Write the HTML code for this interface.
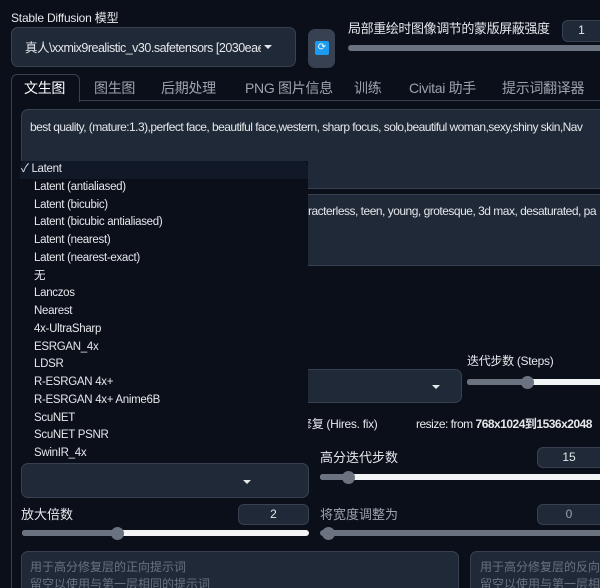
<!DOCTYPE html><html><head><meta charset="utf-8"><style>
*{box-sizing:border-box;margin:0;padding:0}
html,body{width:600px;height:588px;overflow:hidden}
body{background:#0b0f19;font-family:"Liberation Sans","Noto Sans CJK SC",sans-serif;color:#e5e7eb;position:relative;font-size:13px}
.a{position:absolute}
.box{position:absolute;background:#1f2937;border:1px solid #374151;border-radius:7px}
.lbl{position:absolute;font-size:13px;color:#e5e7eb;white-space:nowrap;overflow:hidden}
.trk{position:absolute;height:6px;border-radius:3px;background:#f3f4f6}
.fill{position:absolute;height:6px;border-radius:3px;background:#6b7280}
.th{position:absolute;width:13px;height:13px;border-radius:50%;background:#6b7280}
.caret{position:absolute;width:0;height:0;border-left:4px solid transparent;border-right:4px solid transparent;border-top:4px solid #e5e7eb}
.num{position:absolute;background:#1f2937;border:1px solid #374151;border-radius:6px;font-size:12px;text-align:center;line-height:19px;height:21px}
.tab{position:absolute;top:78px;font-size:14px;color:#9ca3af;letter-spacing:-0.3px}
.dd div{height:17.75px;line-height:17.75px;padding-left:14px;font-size:11.5px;color:#e5e7eb;white-space:nowrap;letter-spacing:-0.3px}
</style></head><body>
<div class="lbl" style="left:11px;top:9px;font-size:12px;letter-spacing:-0.2px">Stable Diffusion 模型</div>
<div class="box" style="left:11px;top:27px;width:285px;height:40px"></div>
<div class="lbl" style="left:25px;top:37px;width:236px;font-size:12.5px;letter-spacing:-0.5px">真人\xxmix9realistic_v30.safetensors [2030eae6</div>
<div class="caret" style="left:264px;top:45px"></div>
<div class="box" style="left:308px;top:29px;width:27px;height:39px;background:#374151;border-color:#374151"></div>
<div class="a" style="left:315px;top:41px;width:14px;height:14px;background:#1d9bf0;border-radius:2px;color:#fff;font-size:10px;line-height:14px;text-align:center">⟳</div>
<div class="lbl" style="left:348px;top:18px;font-size:13px;letter-spacing:-0.4px">局部重绘时图像调节的蒙版屏蔽强度</div>
<div class="num" style="left:562px;top:20px;width:38px;height:22px;border-right:none;border-radius:6px 0 0 6px">1</div>
<div class="fill" style="left:348px;top:45px;width:252px;border-radius:3px 0 0 3px"></div>

<div class="a" style="left:12px;top:100px;width:588px;height:1px;background:#374151"></div>
<div class="a" style="left:11px;top:74px;width:69px;height:28px;border:1px solid #374151;border-bottom:none;border-radius:6px 6px 0 0;background:#0b0f19"></div>
<div class="a" style="left:11px;top:100px;width:1px;height:488px;background:#374151"></div>
<div class="tab" style="left:24px;color:#fff">文生图</div>
<div class="tab" style="left:94px">图生图</div>
<div class="tab" style="left:161px">后期处理</div>
<div class="tab" style="left:245px">PNG 图片信息</div>
<div class="tab" style="left:354px">训练</div>
<div class="tab" style="left:409px">Civitai 助手</div>
<div class="tab" style="left:502px">提示词翻译器</div>

<div class="box" style="left:21px;top:109px;width:579px;height:80px;border-right:none;border-radius:7px 0 0 7px"></div>
<div class="lbl" style="left:30px;top:120px;width:570px;font-size:12px;letter-spacing:-0.55px">best quality, (mature:1.3),perfect face, beautiful face,western, sharp focus, solo,beautiful woman,sexy,shiny skin,Nav</div>
<div class="box" style="left:21px;top:194px;width:579px;height:72px;border-right:none;border-radius:7px 0 0 7px"></div>
<div class="lbl" style="left:308px;top:204px;width:292px;font-size:12px;letter-spacing:-0.5px">racterless, teen, young, grotesque, 3d max, desaturated, pa</div>

<div class="box" style="left:290px;top:369px;width:172px;height:34px;border-radius:7px"></div>
<div class="caret" style="left:432px;top:385px"></div>
<div class="lbl" style="left:467px;top:352px;font-size:12px;letter-spacing:-0.3px">迭代步数 (Steps)</div>
<div class="trk" style="left:467px;top:379px;width:133px;border-radius:3px 0 0 3px"></div>
<div class="fill" style="left:467px;top:379px;width:62px"></div>
<div class="th" style="left:521px;top:376px"></div>
<div class="lbl" style="left:300px;top:415px;font-size:12px;letter-spacing:-0.3px">修复 (Hires. fix)</div>
<div class="lbl" style="left:416px;top:415px;width:184px;font-size:12px;letter-spacing:-0.5px">resize: from <b>768x1024到1536x2048</b></div>

<div class="lbl" style="left:320px;top:447px;font-size:13px">高分迭代步数</div>
<div class="num" style="left:537px;top:447px;width:63px;border-right:none;border-radius:6px 0 0 6px">15</div>
<div class="trk" style="left:320px;top:474px;width:280px;border-radius:3px 0 0 3px"></div>
<div class="fill" style="left:320px;top:474px;width:32px"></div>
<div class="th" style="left:342px;top:471px"></div>

<div class="box" style="left:21px;top:463px;width:288px;height:35px"></div>
<div class="caret" style="left:243px;top:480px"></div>
<div class="lbl" style="left:21px;top:504px;font-size:13px">放大倍数</div>
<div class="num" style="left:238px;top:504px;width:71px">2</div>
<div class="trk" style="left:22px;top:530px;width:287px"></div>
<div class="fill" style="left:22px;top:530px;width:100px"></div>
<div class="th" style="left:111px;top:527px"></div>
<div class="lbl" style="left:320px;top:504px;font-size:13px;color:#9ca3af">将宽度调整为</div>
<div class="num" style="left:537px;top:504px;width:63px;color:#9ca3af;border-right:none;border-radius:6px 0 0 6px">0</div>
<div class="fill" style="left:320px;top:530px;width:280px;border-radius:3px 0 0 3px"></div>
<div class="th" style="left:322px;top:527px"></div>

<div class="box" style="left:21px;top:551px;width:438px;height:37px;border-bottom:none;border-radius:7px 7px 0 0"></div>
<div class="lbl" style="left:30px;top:559px;font-size:12px;color:#6b7280;line-height:17px">用于高分修复层的正向提示词<br>留空以使用与第一层相同的提示词</div>
<div class="box" style="left:470px;top:551px;width:130px;height:37px;border:1px solid #374151;border-right:none;border-bottom:none;border-radius:7px 0 0 0"></div>
<div class="lbl" style="left:480px;top:559px;width:120px;font-size:12px;color:#6b7280;line-height:17px">用于高分修复层的反向提示词<br>留空以使用与第一层相同</div>

<div class="a dd" style="left:20px;top:161px;width:288px;height:302px;background:#0b0f19">
<div style="background:#111827;border-radius:6px 6px 0 0;padding-left:1px">✓ Latent</div>
<div>Latent (antialiased)</div><div>Latent (bicubic)</div><div>Latent (bicubic antialiased)</div><div>Latent (nearest)</div><div>Latent (nearest-exact)</div><div>无</div><div>Lanczos</div><div>Nearest</div><div>4x-UltraSharp</div><div>ESRGAN_4x</div><div>LDSR</div><div>R-ESRGAN 4x+</div><div>R-ESRGAN 4x+ Anime6B</div><div>ScuNET</div><div>ScuNET PSNR</div><div>SwinIR_4x</div>
</div>
</body></html>
